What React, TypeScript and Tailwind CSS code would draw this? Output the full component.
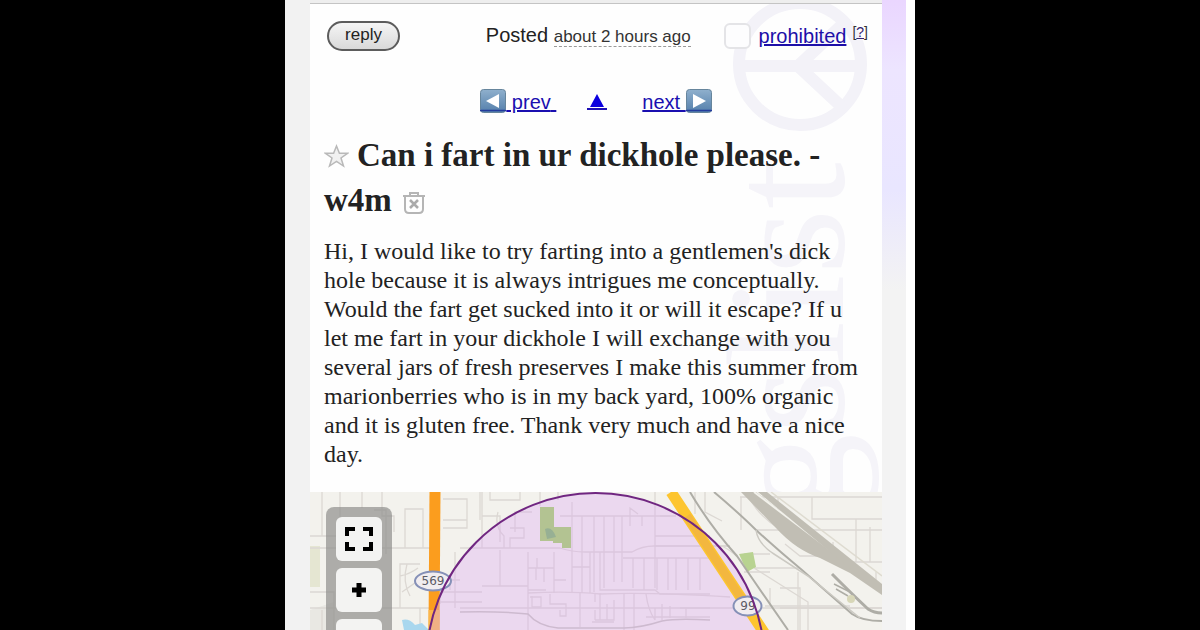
import React from "react";

const ROADS = [
  "M0 56H120M0 116H120 M0 44H38 M12 0V44 M30 0V30 M52 0V16 M72 0V24H84V40",
  "M64 18H76V62 M95 56V17H113V56 M133 28H157V7H133 M170 0V28 M133 36H157V28 M0 100H24V138 M12 118V138",
  "M90 116V72H110 M97 72Q92 90 100 104 M92 100Q104 92 114 84 M90 84Q100 82 108 76",
  "M110 116V138 M150 116H572",
  "M172 0V56 M150 56H250Q262 60 275 60H322Q332 54 344 54H420 M188 20Q184 34 194 44V56 M200 36H214V46H200V56",
  "M172 24H190V50 M205 40V20H222 M250 24H360 M262 24V101 M272 24V101 M284 24V100 M294 24V96 M304 24V90 M312 24V90 M262 10V24",
  "M345 0V96 M345 44H400 M345 54H420 M313 66H400 M323 66V96 M334 66V98 M347 66V98 M358 66V98 M366 66V98 M378 66V98 M390 66V98",
  "M190 58V94 M172 94H218V138 M218 60V130 M218 76H244 M227 66V76 M226 76V88 M234 76V90 M244 60V101",
  "M218 98H236 M244 88H256 M262 75H280V101 M280 60V101 M290 60V98H345L350 102H400",
  "M218 101Q260 99 290 102Q340 100 420 105 M220 105H231V115H222V104 M240 102V112H256V124H250V118 M270 101V135",
  "M285 102V110M285 118V128M285 128H304V108 M290 101V128 M297 112V128 M314 101V138 M324 101V138 M282 130H304",
  "M336 102Q338 118 345 128 M345 116V128 M352 112V128 M360 114V126 M336 125H400 M370 116H400 M376 116V126",
  "M120 60V110H172 M130 85V112 M140 82V98 M120 88H150 M145 60V116 M120 100H172",
  "M320 24V16L328 22 M320 24V34 M332 24V34 M350 24H366 M385 0V22 M180 0V8H210V0 M230 0V14M248 0V8",
  "M395 0V20L412 29 M430 5H572 M468 5V18H475 M502 5V27H572 M446 38H572 M431 5V38 M436 0Q446 22 468 36",
  "M546 27V70 M560 35V70H572 M523 70H572 M523 50V64H490L475 52 M444 76L498 110V138 M444 76H490",
  "M412 54Q424 60 434 72 M434 62H460 M434 80H460 M470 96H490V138 M460 96V114 M470 116H572 M488 80V138 M455 114H540 M566 80V94",
];

const PARKS = [
  "M230 15H244V35H261V56H252V51H243V49H230Z",
  "M429 62L443 60L446 75L437 80Z",
];

function StreetMap() {
  return (
    <svg
      className="block h-full w-full"
      viewBox="0 0 572 138"
      preserveAspectRatio="xMidYMin slice"
      role="img"
      aria-label="Map"
    >
      <rect width="572" height="138" fill="#f3f2ed" />
      <path d="M0 54H10V95H0Z" fill="#e5e6d2" />
      <path d="M0 118L24 110V138H0Z" fill="#e9e8e3" />
      <g fill="none" stroke="#dcd8d3" strokeWidth="1.3">
        {ROADS.map((d) => (
          <path key={d} d={d} />
        ))}
      </g>
      <path d="M92 128Q99 126 105 133L112 131L119 138H94Z" fill="#a9d7ee" />
      <path d={PARKS[1]} fill="#b8d391" />
      <g fill="none" stroke="#aeada6">
        <path d="M380 0Q400 34 427 64Q450 98 478 138" strokeWidth="2" />
        <path d="M404 0Q430 22 446 38Q470 60 492 78L542 122Q552 129 572 129" strokeWidth="2" />
        <path d="M446 38Q448 52 464 62L498 84L550 126" stroke="#cbc9c2" strokeWidth="1.5" />
        <path d="M522 82Q544 104 558 117Q564 121 572 121" strokeWidth="3" />
        <path d="M524 92L540 100M526 97L538 104" strokeWidth="1.5" />
      </g>
      <path d="M431 0H446L572 98V103L540 81L510 66Q486 58 466 36Z" fill="#c1beb4" />
      <path d="M444 0L572 97" stroke="#f2f1eb" strokeWidth="2" />
      <path d="M448 0H457L572 92V101L560 93Z" fill="#c1beb4" />
      <path d="M461 0L572 84" stroke="#dedbd0" strokeWidth="1.5" />
      <circle cx="541" cy="107" r="4" fill="#d8d7b8" />
      <path d="M125 0L124 138" stroke="#fb9d1e" strokeWidth="11" />
      <path d="M124 118V138" stroke="#fbb64b" strokeWidth="11" />
      <circle cx="285.5" cy="170" r="169" fill="#dca8f2" fillOpacity="0.34" />
      <path d={PARKS[0]} fill="#b3c392" />
      <path d="M235 37Q242 34 246 45L237 47Z" fill="#97b094" />
      <path
        d="M150 120Q190 119 218 122Q228 134 248 136H314Q330 136 352 129Q366 126 400 128"
        fill="none"
        stroke="#cdbacf"
        strokeWidth="1.5"
      />
      <path d="M361 0L410 74L455 142" fill="none" stroke="#fdc52f" strokeWidth="11" />
      <path d="M377 24L410 74L441 121" fill="none" stroke="#f3b73f" strokeWidth="8" />
      <g fill="#f1edf0" stroke="#8590b7" strokeWidth="2">
        <ellipse cx="123" cy="89" rx="18" ry="9.5" />
        <ellipse cx="437.5" cy="114" rx="14" ry="9.5" />
      </g>
      <g className="font-['DejaVu_Sans',sans-serif] text-[12px]" fill="#5b5b66" textAnchor="middle">
        <text x="123" y="93">569</text>
        <text x="438" y="118">99</text>
      </g>
      <circle cx="285.5" cy="170" r="169" fill="none" stroke="#702681" strokeWidth="2" />
    </svg>
  );
}

function Watermark() {
  return (
    <svg
      className="pointer-events-none absolute right-0 top-0 h-[488px] w-[172px]"
      viewBox="710 4 172 488"
      aria-hidden="true"
    >
      <g fill="none" stroke="#f3f2f8" strokeWidth="12">
        <circle cx="800" cy="64" r="61" />
        <path d="M739 66H861M798 66L843 24M798 66L843 108" />
      </g>
      <text
        transform="translate(843 517) rotate(-90)"
        className="font-['Liberation_Serif',serif] text-[168px]"
        fill="#f5f4f9"
      >
        gslist
      </text>
    </svg>
  );
}

function ArrowTile({ direction }: { direction: "left" | "right" }) {
  return (
    <svg className="inline-block h-6 w-[26px] align-[-4px]" viewBox="0 0 26 24" aria-hidden="true">
      <defs>
        <linearGradient id={"tile-" + direction} x1="0" y1="0" x2="0" y2="1">
          <stop offset="0" stopColor="#8fb0cd" />
          <stop offset="1" stopColor="#547fab" />
        </linearGradient>
      </defs>
      <rect x="0.5" y="0.5" width="25" height="23" rx="3" fill={"url(#tile-" + direction + ")"} stroke="#66859c" />
      <path d={direction === "left" ? "M19 5V19L6 12Z" : "M7 5V19L20 12Z"} fill="#fff" />
      <path d="M0 21.5H26" stroke="#233b9c" strokeWidth="1.5" />
    </svg>
  );
}

const mapButton =
  "flex h-11 w-[46px] items-center justify-center rounded-md bg-[#f3f3f2] text-black";

export default function App() {
  return (
    <div className="flex h-screen justify-center overflow-hidden bg-black">
      <div className="flex w-full max-w-[630px] bg-white">
        <div className="w-[25px] shrink-0 bg-[#f2f2f2]" />
        <main className="flex min-w-0 flex-1 flex-col bg-[#fefefe] font-['Liberation_Sans',sans-serif] text-[#222]">
          <div className="h-1 shrink-0 border-b border-[#c4c4c4] bg-[#eeeeee]" />
          <article className="relative shrink-0">
            <Watermark />
            <div className="relative px-[14px]">
              <header className="flex items-center justify-between pl-[3px] pt-[17px]">
                <button
                  type="button"
                  className="h-[30px] w-[73px] rounded-full border-2 border-[#5c5c5c] bg-linear-to-b from-[#f5f5f5] to-[#d9d9d9] pb-0.5 text-[17px] leading-6 text-[#222]"
                >
                  reply
                </button>
                <p className="ml-[53px] text-[20px] leading-6">
                  Posted{" "}
                  <time className="border-b border-dashed border-[#999] text-[17px] text-[#333]">
                    about 2 hours ago
                  </time>
                </p>
                <div className="flex items-center gap-2">
                  <input
                    type="checkbox"
                    aria-label="prohibited"
                    className="h-[26px] w-[27px] appearance-none rounded-md border-2 border-[#e4e4e7] bg-[#fdfdfe]"
                  />
                  <span className="flex items-start gap-1.5 text-[20px] leading-6">
                    <a href="#prohibited" className="text-[#1d0fa8] underline">
                      prohibited
                    </a>
                    <span className="text-[14px] leading-4 text-[#333]">
                      [<a href="#help" className="text-[#33256f] underline">?</a>]
                    </span>
                  </span>
                </div>
              </header>
              <nav className="mt-[37px] flex items-center justify-center gap-[31px] text-[20px] leading-7 text-[#1a0fb0]">
                <a href="#prev" className="whitespace-pre underline">
                  <ArrowTile direction="left" /> prev{" "}
                </a>
                <a href="#top" aria-label="back to top" className="border-b-2 border-[#1d0fb5] px-[2px]">
                  <svg className="h-[14px] w-[16px]" viewBox="0 0 16 14" aria-hidden="true">
                    <path d="M8 0L15 13H1Z" fill="#0b00df" />
                  </svg>
                </a>
                <a href="#next" className="ml-1 whitespace-pre underline">
                  next <ArrowTile direction="right" />
                </a>
              </nav>
              <h1 className="mt-[17px] font-['Liberation_Serif',serif] text-[33px] font-bold leading-[45px]">
                <svg className="mr-2 inline-block h-6 w-[25px] align-[-2px]" viewBox="0 0 25 24" aria-hidden="true">
                  <path d="M12.5 2L15.4 9.3H23.5L17 14L19.5 22L12.5 17.3L5.5 22L8 14L1.5 9.3H9.6Z" fill="#f1f1f1" stroke="#b9b9b9" strokeWidth="1.5" />
                </svg>
                Can i fart in ur dickhole please. - w4m
                <svg className="ml-[10px] inline-block h-6 w-6 align-[-4px]" viewBox="0 0 24 24" fill="none" stroke="#b5b5b5" strokeWidth="2" aria-hidden="true">
                  <path d="M1 5H23M8 5V2H16V5M3 5V18Q3 22 7 22H17Q21 22 21 18V5" />
                  <path d="M8 9L16 17M16 9L8 17" stroke="#aaa" strokeWidth="2.5" />
                </svg>
              </h1>
              <section className="pb-[23px] pt-[14px] font-['Liberation_Serif',serif] text-[24px] leading-[29px]">
                Hi, I would like to try farting into a gentlemen's dick hole because it is always
                intrigues me conceptually. Would the fart get sucked into it or will it escape? If u
                let me fart in your dickhole I will exchange with you several jars of fresh preserves
                I make this summer from marionberries who is in my back yard, 100% organic and it is
                gluten free. Thank very much and have a nice day.
              </section>
            </div>
          </article>
          <div className="relative min-h-0 flex-1 overflow-hidden">
            <StreetMap />
            <div className="absolute left-4 top-[15px] flex flex-col gap-[7px] rounded-lg bg-[#8f8f8c]/70 p-[10px]">
              <button type="button" aria-label="Full screen" className={mapButton}>
                <svg className="h-[24px] w-[28px]" viewBox="0 0 28 24" fill="none" stroke="currentColor" strokeWidth="4" aria-hidden="true">
                  <path d="M2 9V2H10M18 2H26V9M26 15V22H18M10 22H2V15" />
                </svg>
              </button>
              <button type="button" aria-label="Zoom in" className={mapButton}>
                <svg className="h-[14px] w-[14px]" viewBox="0 0 14 14" stroke="currentColor" strokeWidth="5" aria-hidden="true">
                  <path d="M7 0V14M0 7H14" />
                </svg>
              </button>
              <button type="button" aria-label="Zoom out" className={mapButton}>
                <svg className="h-[14px] w-[14px]" viewBox="0 0 14 14" stroke="currentColor" strokeWidth="5" aria-hidden="true">
                  <path d="M0 7H14" />
                </svg>
              </button>
            </div>
          </div>
        </main>
        <div className="w-6 shrink-0 bg-[linear-gradient(to_bottom,#ead6ff_0px,#ede5ff_70px,#e9e6ff_190px,#f3f3f3_290px)]" />
        <div className="w-[9px] shrink-0 bg-white" />
      </div>
    </div>
  );
}
